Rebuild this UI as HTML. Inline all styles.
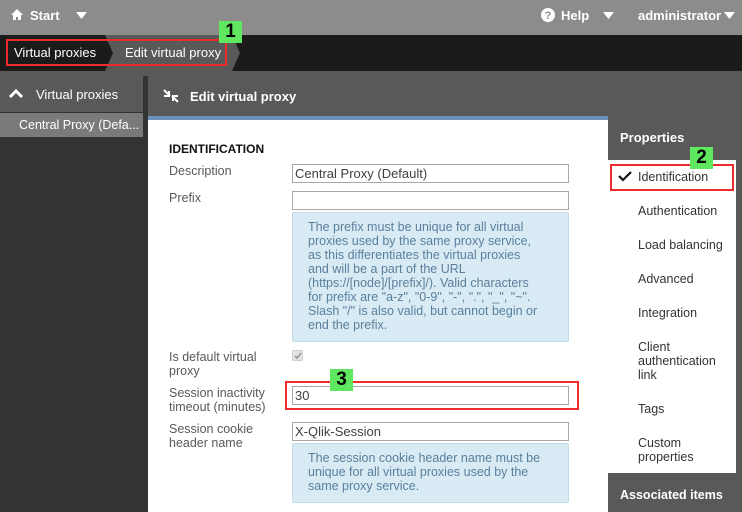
<!DOCTYPE html>
<html><head><style>
*{margin:0;padding:0;box-sizing:border-box}
body{width:742px;height:512px;overflow:hidden;background:#595959;font-family:"Liberation Sans",sans-serif;position:relative;font-size:12px}
.a{position:absolute}
.top{left:0;top:0;width:742px;height:35px;background:#8c8c8c;color:#fff;font-weight:bold;font-size:13px}
.bc{left:0;top:35px;width:742px;height:36px;background:#1b1b1b}
.lbl{color:#595959;font-size:12.5px;line-height:14px}
.inp{background:#fff;border:1px solid #a8a8a8;height:19px;font-size:13px;color:#404040;padding-left:2px;line-height:17px}
.info{background:#d8ebf5;border:1px solid #c2dcea;border-radius:2px;color:#5a7f9c;font-size:12.5px;line-height:14px;padding:7px 24px 6px 15px}
.rl{left:638px;color:#333;font-size:12.5px;line-height:14px}
.red{border:2px solid #ee2b2b}
.num{background:#5fe85f;color:#000;font-weight:bold;font-size:19px;text-align:center;line-height:22px;width:23px;height:22px}
</style></head><body>
<div class="a top">
 <svg class="a" style="left:10px;top:8px" width="14" height="13" viewBox="0 0 14 13"><path d="M7 1L1 7h2v5h3V9h2v3h3V7h2z" fill="#fff"/></svg>
 <span class="a" style="left:30px;top:8px">Start</span>
 <svg class="a" style="left:76px;top:12px" width="11" height="7"><path d="M0 0h11L5.5 7z" fill="#fff"/></svg>
 <svg class="a" style="left:541px;top:8px" width="14" height="14"><circle cx="7" cy="7" r="7" fill="#fff"/><text x="7" y="11" font-size="11" font-weight="bold" text-anchor="middle" fill="#8c8c8c" font-family="Liberation Sans">?</text></svg>
 <span class="a" style="left:561px;top:8px">Help</span>
 <svg class="a" style="left:603px;top:12px" width="11" height="7"><path d="M0 0h11L5.5 7z" fill="#fff"/></svg>
 <span class="a" style="left:638px;top:8px">administrator</span>
 <svg class="a" style="left:724px;top:12px" width="11" height="7"><path d="M0 0h11L5.5 7z" fill="#fff"/></svg>
</div>
<div class="a bc">
 <svg class="a" style="left:0;top:0" width="250" height="36"><path d="M105 0H232L240 18L232 36H105L113 18z" fill="#595959"/></svg>
 <span class="a" style="left:14px;top:10px;color:#fff;font-size:13px">Virtual proxies</span>
 <span class="a" style="left:125px;top:10px;color:#fff;font-size:13px">Edit virtual proxy</span>
</div>
<div class="a red" style="left:6px;top:39px;width:221px;height:27px"></div>
<div class="a num" style="left:219px;top:21px">1</div>
<div class="a" style="left:0;top:76px;width:148px;height:436px;background:#333"></div>
<div class="a" style="left:0;top:76px;width:143px;height:36px;background:#595959"></div>
<svg class="a" style="left:8px;top:88px" width="16" height="11"><path d="M2 9L8 3L14 9" stroke="#fff" stroke-width="3" fill="none"/></svg>
<span class="a" style="left:36px;top:87px;color:#fff;font-size:13px">Virtual proxies</span>
<div class="a" style="left:0;top:113px;width:143px;height:24px;background:#7a7a7a"></div>
<span class="a" style="left:19px;top:118px;color:#fff;font-size:12.5px">Central Proxy (Defa...</span>
<div class="a" style="left:148px;top:76px;width:460px;height:40px;background:#595959"></div>
<svg class="a" style="left:162px;top:88px" width="18" height="16" viewBox="0 0 18 16"><path d="M2 2L8 8M16 14L10 8M7 3V8H2M11 13V8H16" stroke="#fff" stroke-width="2" fill="none"/></svg>
<span class="a" style="left:190px;top:89px;color:#fff;font-weight:bold;font-size:13px">Edit virtual proxy</span>
<div class="a" style="left:148px;top:116px;width:460px;height:4px;background:#6b92bd"></div>
<div class="a" style="left:148px;top:120px;width:460px;height:392px;background:#fff"></div>
<span class="a" style="left:169px;top:142px;font-weight:bold;font-size:12px;color:#111">IDENTIFICATION</span>
<span class="a lbl" style="left:169px;top:164px">Description</span>
<div class="a inp" style="left:292px;top:164px;width:277px">Central Proxy (Default)</div>
<span class="a lbl" style="left:169px;top:191px">Prefix</span>
<div class="a inp" style="left:292px;top:191px;width:277px"></div>
<div class="a info" style="left:292px;top:212px;width:277px;height:130px">The prefix must be unique for all virtual proxies used by the same proxy service, as this differentiates the virtual proxies and will be a part of the URL (https://[node]/[prefix]/). Valid characters for prefix are "a-z", "0-9", "-", ".", "_", "~". Slash "/" is also valid, but cannot begin or end the prefix.</div>
<span class="a lbl" style="left:169px;top:350px;width:110px">Is default virtual proxy</span>
<div class="a" style="left:292px;top:350px;width:11px;height:11px;background:#e4e4e4;border:1px solid #ccc;border-radius:2px"></div>
<svg class="a" style="left:293px;top:351px" width="10" height="10"><path d="M2 5L4 7L8 2" stroke="#999" stroke-width="1.8" fill="none"/></svg>
<span class="a lbl" style="left:169px;top:386px;width:110px">Session inactivity timeout (minutes)</span>
<div class="a inp" style="left:292px;top:386px;width:277px">30</div>
<div class="a red" style="left:285px;top:381px;width:294px;height:29px"></div>
<div class="a num" style="left:330px;top:369px">3</div>
<span class="a lbl" style="left:169px;top:422px;width:100px">Session cookie header name</span>
<div class="a inp" style="left:292px;top:422px;width:277px">X-Qlik-Session</div>
<div class="a info" style="left:292px;top:443px;width:277px;height:60px">The session cookie header name must be unique for all virtual proxies used by the same proxy service.</div>
<span class="a" style="left:620px;top:130px;color:#fff;font-weight:bold;font-size:13px">Properties</span>
<div class="a" style="left:608px;top:160px;width:128px;height:313px;background:#fff"></div>
<svg class="a" style="left:618px;top:170px" width="14" height="12"><path d="M1 6L5 10L13 2" stroke="#111" stroke-width="2.2" fill="none"/></svg>
<span class="a rl" style="top:170px">Identification</span>
<div class="a red" style="left:610px;top:164px;width:124px;height:27px"></div>
<div class="a num" style="left:690px;top:147px">2</div>
<span class="a rl" style="top:204px">Authentication</span>
<span class="a rl" style="top:238px">Load balancing</span>
<span class="a rl" style="top:272px">Advanced</span>
<span class="a rl" style="top:306px">Integration</span>
<span class="a rl" style="top:340px;width:90px">Client authentication link</span>
<span class="a rl" style="top:402px">Tags</span>
<span class="a rl" style="top:436px;width:80px">Custom properties</span>
<span class="a" style="left:620px;top:488px;color:#fff;font-weight:bold;font-size:12.5px">Associated items</span>
</body></html>
